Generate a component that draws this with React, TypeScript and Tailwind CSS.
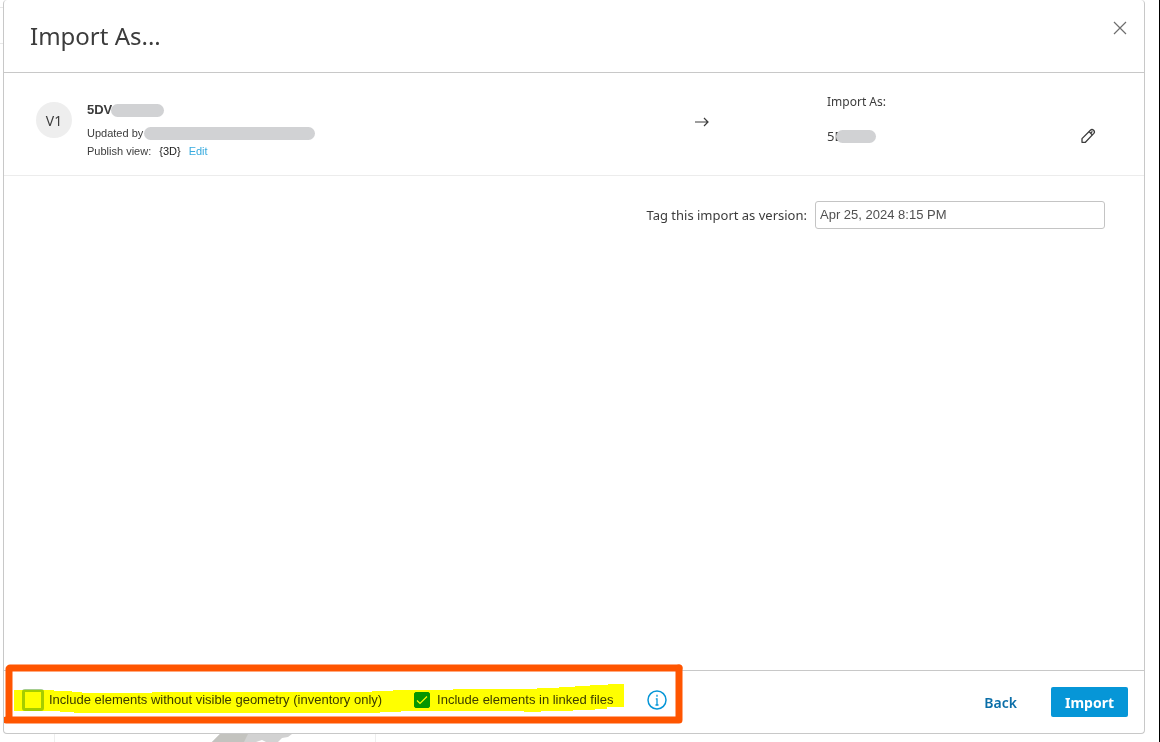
import { useState } from 'react';

interface RedactedProps {
  className: string;
}

// Grey bar that hides private text
function Redacted({ className }: RedactedProps) {
  return <span aria-hidden="true" className={`relative inline-block rounded-full bg-[#d1d2d4] ${className}`} />;
}

function CloseIcon() {
  return (
    <svg width="14" height="14" viewBox="0 0 14 14" fill="none" stroke="#6e6e6e" strokeWidth="1.2">
      <path d="M1 1l12 12M13 1L1 13" />
    </svg>
  );
}

function ArrowIcon() {
  return (
    <svg width="14" height="10" viewBox="0 0 14 10" fill="none" stroke="#3c3c3c" strokeWidth="1.2">
      <path d="M0 5h13M9 1l4 4-4 4" />
    </svg>
  );
}

function PencilIcon() {
  return (
    <svg width="16" height="16" viewBox="0 0 16 16" fill="none" stroke="#3c3c3c" strokeWidth="1.3" strokeLinejoin="round">
      <path d="M2 14.3V10.6L10.4 2.2Q12 .8 13.6 2.2Q15.2 3.8 13.8 5.4L5.4 14.3Z" />
      <path d="M9 3.6l3.4 3.4M10.6 5.2l1.8-1.8" />
    </svg>
  );
}

function InfoIcon() {
  return (
    <svg width="20" height="20" viewBox="0 0 20 20" fill="none" stroke="#0696d7" strokeWidth="1.5">
      <circle cx="10" cy="10" r="9" />
      <path d="M8.8 8.8H10V15M8.5 15h3M10 4.8v1.9" strokeWidth="1.3" />
    </svg>
  );
}

// Marker strokes drawn over the import options
function Markup() {
  return (
    <>
      <svg
        className="pointer-events-none absolute -top-2 left-0 mix-blend-multiply"
        width="684"
        height="64"
        viewBox="0 0 684 64"
        fill="#ffff00"
      >
        <path d="M10 27H50V28H68V29H78V30H148V29H368V28H389V27H449V26H533V25H555V24H571V23H586V22H604V21H620V44H603V46H591V47H569V48H537V49H520V48H397V49H376V50H70V49H56V48H10Z" />
      </svg>
      <svg
        className="pointer-events-none absolute -top-2 left-0"
        width="684"
        height="64"
        viewBox="0 0 684 64"
        fill="none"
        stroke="#ff5500"
        strokeWidth="7"
        strokeLinecap="round"
        strokeLinejoin="round"
      >
        <path d="M6 5H675" />
        <path d="M5 6V56" />
        <path d="M2 57H675V5" />
      </svg>
    </>
  );
}

export default function App() {
  const [version, setVersion] = useState('Apr 25, 2024 8:15 PM');
  const [includeHidden, setIncludeHidden] = useState(false);
  const [includeLinked, setIncludeLinked] = useState(true);

  return (
    <div className="flex h-screen border-r border-black bg-white font-['Noto_Sans',sans-serif] text-[#3c3c3c]">
      {/* Page edge behind the dialog */}
      <div className="h-11 w-[3px] shrink-0 pt-[7px]">
        <div className="h-full border-y border-[#e8e8e8]" />
      </div>

      <div className="flex min-w-0 flex-1 flex-col pr-[14px]">
        <main className="flex flex-1 flex-col rounded border border-t-0 border-[#c8c8c8] bg-white">
          <header className="flex h-[73px] items-center justify-between border-b border-[#c8c8c8] pr-[17px] pb-px pl-[26px]">
            <h1 className="text-[24px] leading-8">Import As...</h1>
            <button type="button" aria-label="Close" className="mb-4">
              <CloseIcon />
            </button>
          </header>

          <section className="flex h-[103px] items-center border-b border-[#ececec] pb-1 pl-8">
            <div className="mb-1 flex size-9 items-center justify-center rounded-full bg-[#eeeeee] text-[14px]">
              V1
            </div>
            <div className="ml-[15px] flex-1 pt-4 font-['Liberation_Sans',sans-serif] text-[11px] leading-[18px]">
              <div className="flex items-center text-[13px] leading-5 font-bold">
                5DV
                <Redacted className="-ml-px h-[13px] w-[53px]" />
              </div>
              <div className="mt-1 flex items-center">
                Updated by
                <Redacted className="ml-px h-[13px] w-[171px]" />
              </div>
              <div className="flex gap-2">
                <span>Publish view:</span>
                <span className="text-[#202020]">{'{3D}'}</span>
                <a href="#edit" className="text-[#38abdf]">Edit</a>
              </div>
            </div>
            <ArrowIcon />
            <div className="ml-[118px] flex w-[317px] items-end justify-between pr-12 pb-1">
              <div className="text-[12px] leading-4">
                <div>Import As:</div>
                <div className="mt-4 flex h-5 items-center text-[13px]">
                  5D
                  <Redacted className="-ml-2 h-[13px] w-10" />
                </div>
              </div>
              <button type="button" aria-label="Edit name" className="mb-[2px]">
                <PencilIcon />
              </button>
            </div>
          </section>

          <div className="flex flex-1 items-start justify-end pt-[25px] pr-[39px]">
            <label htmlFor="version" className="pt-1 pr-2 text-[13px] leading-5">
              Tag this import as version:
            </label>
            <input
              id="version"
              value={version}
              onChange={(e) => setVersion(e.target.value)}
              className="h-7 w-[290px] rounded-[3px] border border-[#c4c4c4] px-1 pb-[2px] font-['Liberation_Sans',sans-serif] text-[13px] text-[#505050]"
            />
          </div>

          <footer className="relative flex h-[63px] items-center justify-between border-t border-[#c8c8c8] pr-4 pl-[18px]">
            <div className="flex items-center pb-1 font-['Liberation_Sans',sans-serif] text-[13px] leading-5">
              <label className="flex items-center gap-[5px]">
                <input
                  type="checkbox"
                  checked={includeHidden}
                  onChange={(e) => setIncludeHidden(e.target.checked)}
                  className="size-[22px] appearance-none rounded-[3px] border-3 border-[#a5cd90] bg-white checked:bg-[#0696d7]"
                />
                Include elements without visible geometry (inventory only)
              </label>
              <label className="ml-8 flex items-center gap-[7px]">
                <span className="grid">
                  <input
                    type="checkbox"
                    checked={includeLinked}
                    onChange={(e) => setIncludeLinked(e.target.checked)}
                    className="col-start-1 row-start-1 size-4 appearance-none rounded-[2px] border border-[#0696d7] checked:bg-[#0696d7]"
                  />
                  <svg
                    className="pointer-events-none col-start-1 row-start-1"
                    width="16"
                    height="16"
                    viewBox="0 0 16 16"
                    fill="none"
                    stroke="#ffffff"
                    strokeWidth="1.2"
                  >
                    <path d="M3 8.5l3 3L13 4.5" />
                  </svg>
                </span>
                Include elements in linked files
              </label>
              <button type="button" aria-label="More information" className="ml-[34px]">
                <InfoIcon />
              </button>
            </div>
            <div className="flex items-center gap-[34px] text-[14px] font-semibold">
              <button type="button" className="text-[#0a6ea8]">Back</button>
              <button type="button" className="h-[30px] w-[77px] rounded-[2px] bg-[#0696d7] font-bold text-white">
                Import
              </button>
            </div>
            <Markup />
          </footer>
        </main>

        {/* Sliver of the model viewer below the dialog */}
        <div className="ml-[51px] h-2 w-[322px] shrink-0 border-x border-[#eeeeee]">
          <svg className="ml-[157px]" width="82" height="8" viewBox="0 0 82 8">
            <path d="M8 0H80L76 3L70 4L66 8H54L50 6L44 8H0Z" fill="#d2d2d2" />
            <path d="M8 0H36L32 8H0Z" fill="#c3c3bf" />
          </svg>
        </div>
      </div>
    </div>
  );
}
